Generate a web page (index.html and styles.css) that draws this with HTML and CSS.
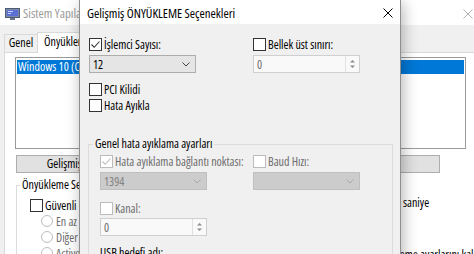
FILE: index.html
```html
<!DOCTYPE html>
<html lang="tr">
<head>
<meta charset="utf-8">
<title>Gelişmiş ÖNYÜKLEME Seçenekleri</title>
<link rel="stylesheet" href="styles.css">
</head>
<body>
<div class="bgwin">
  <div class="bg-title">
    <svg class="appicon" viewBox="0 0 15 12"><rect x="0.5" y="0.5" width="14" height="9" fill="#7d8aa3" stroke="#4d5b78"/><rect x="2" y="2" width="11" height="6" fill="#5b6fd6"/><rect x="3" y="3" width="5" height="1" fill="#c8d4ff"/><rect x="3" y="5" width="3" height="1" fill="#c8d4ff"/><rect x="5" y="10" width="5" height="2" fill="#6c7690"/></svg>
    <span class="bg-title-text">Sistem Yapılandırması</span>
    <span class="bg-close"><svg width="10" height="10" viewBox="0 0 10 10"><path d="M0.5 0.5L9.5 9.5M9.5 0.5L0.5 9.5" stroke="#b4b4b4" stroke-width="1"/></svg></span>
  </div>
  <div class="bg-body">
    <div class="tabs">
      <div class="tab">Genel</div>
      <div class="tab sel">Önyükleme</div>
      <div class="tab">Hizmetler</div>
    </div>
    <div class="panel">
      <div class="listbox">
        <div class="li sel">Windows 10 (C:\WINDOWS) : Geçerli işletim sistemi; Varsayılan işletim sistemi</div>
      </div>
      <div class="btnrow">
        <div class="btn b1">Gelişmiş Seçenekler...</div>
        <div class="btn b2">Varsayılan olarak ayarla</div>
        <div class="btn b3">Sil</div>
      </div>
      <div class="bottom">
        <fieldset class="bgrp">
          <legend>Önyükleme Seçenekleri</legend>
          <div class="bgrp-in">
            <div class="chk"><span class="box"></span>Güvenli Önyükleme</div>
            <div class="radios">
              <div class="rad"><span class="circ"></span>En az</div>
              <div class="rad"><span class="circ"></span>Diğer kabuk</div>
              <div class="rad"><span class="circ"></span>Active Directory onarımı</div>
            </div>
          </div>
        </fieldset>
        <div class="rightcol">
          <div class="rlabel">Zaman aşımı:</div>
          <div class="trow"><span class="tbox">30</span><span>saniye</span></div>
          <div class="chk perm"><span class="box"></span>Tüm önyükleme ayarlarını kalıcı yap</div>
        </div>
      </div>
    </div>
  </div>
</div>

<div class="dlg">
  <div class="dlg-title">
    <span>Gelişmiş ÖNYÜKLEME Seçenekleri</span>
    <span class="dlg-close"><svg width="10" height="10" viewBox="0 0 10 10"><path d="M0.5 0.5L9.5 9.5M9.5 0.5L0.5 9.5" stroke="#000" stroke-width="1"/></svg></span>
  </div>
  <div class="dlg-body">
    <div class="grid2">
      <div class="chk"><span class="box"><svg viewBox="0 0 11 11"><path d="M1.5 5.5L4.2 8.3L9.5 2.5" fill="none" stroke="#333" stroke-width="1.1"/></svg></span>İşlemci Sayısı:</div>
      <div class="chk"><span class="box"></span>Bellek üst sınırı:</div>
      <div class="combo"><span>12</span><svg class="chev" viewBox="0 0 8 5"><path d="M0.5 0.5L4 4L7.5 0.5" fill="none" stroke="#444" stroke-width="1"/></svg></div>
      <div class="spin"><span>0</span><span class="arrows"><svg viewBox="0 0 13 16"><path d="M4 6.5L6.5 4L9 6.5Z" fill="#8a8a8a"/><path d="M4 9.5L6.5 12L9 9.5Z" fill="#8a8a8a"/></svg></span></div>
    </div>
    <div class="chk r3"><span class="box"></span>PCI Kilidi</div>
    <div class="chk r4"><span class="box"></span>Hata Ayıkla</div>
    <fieldset class="grp">
      <legend>Genel hata ayıklama ayarları</legend>
      <div class="grp-in">
        <div class="grid2 g2">
          <div class="chk dis"><span class="box"><svg viewBox="0 0 11 11"><path d="M1.5 5.5L4.2 8.3L9.5 2.5" fill="none" stroke="#bcbcbc" stroke-width="1.1"/></svg></span>Hata ayıklama bağlantı noktası:</div>
          <div class="chk dis"><span class="box"></span>Baud Hızı:</div>
          <div class="combo dis"><span>1394</span><svg class="chev" viewBox="0 0 8 5"><path d="M0.5 0.5L4 4L7.5 0.5" fill="none" stroke="#a8a8a8" stroke-width="1"/></svg></div>
          <div class="combo dis"><span></span><svg class="chev" viewBox="0 0 8 5"><path d="M0.5 0.5L4 4L7.5 0.5" fill="none" stroke="#a8a8a8" stroke-width="1"/></svg></div>
        </div>
        <div class="chk dis r5"><span class="box"></span>Kanal:</div>
        <div class="spin s2"><span>0</span><span class="arrows"><svg viewBox="0 0 13 16"><path d="M4 6.5L6.5 4L9 6.5Z" fill="#8a8a8a"/><path d="M4 9.5L6.5 12L9 9.5Z" fill="#8a8a8a"/></svg></span></div>
        <div class="usb">USB hedefi adı:</div>
      </div>
    </fieldset>
  </div>
</div>
</body>
</html>
```
FILE: styles.css
```css
* { box-sizing: border-box; margin: 0; padding: 0; }
html, body { width: 474px; height: 254px; overflow: hidden; }
body {
  position: relative;
  background: #f0f0f0;
  font-family: "Open Sans", "Noto Sans", sans-serif;
  font-size: 12px;
  font-stretch: 87.5%;
  line-height: 15px;
  color: #000;
}

/* background window */
.bgwin { position: absolute; left: 0; top: 0; z-index: 0; width: 492px; height: 300px; background: #f0f0f0; }
.bg-title { height: 25px; background: #fff; display: flex; align-items: center; padding: 2px 0 0 5px; font-size: 12.8px; }
.appicon { width: 15px; height: 12px; margin-right: 3px; flex: none; }
.bg-title-text { color: #9a9a9a; }
.bg-close { margin-left: auto; width: 46px; display: flex; justify-content: center; padding-right: 2px; }
.bg-close svg { display: block; }

.bg-body { padding: 7px 0 0 4px; }
.tabs { display: flex; align-items: flex-end; height: 20px; }
.tab { height: 18px; border: 1px solid #d9d9d9; border-bottom: none; background: #f0f0f0; padding: 0 4px; line-height: 16px; }
.tab:first-child { width: 34px; text-align: center; padding: 0; }
.tab.sel { height: 21px; margin-bottom: -1px; background: #fff; margin-left: -1px; margin-right: -1px; position: relative; z-index: 1; padding: 1px 6px 0 6px; }
.panel { width: 474px; height: 240px; border: 1px solid #d9d9d9; background: #fff; padding: 4px 0 0 10px; }
.listbox { width: 451px; height: 92px; border: 1px solid #9a9a9a; padding: 2px 1px; }
.li { height: 14px; line-height: 14px; white-space: nowrap; overflow: hidden; padding-left: 1px; }
.li.sel { background: #0078d7; color: #fff; }

.btnrow { display: flex; gap: 7px; margin-top: 6px; padding-left: 1px; }
.btn { height: 18px; border: 1px solid #adadad; background: #e1e1e1; text-align: center; line-height: 16px; white-space: nowrap; }
.b1 { width: 152px; }
.b2 { width: 145px; }
.b3 { width: 113px; }

.bottom { display: flex; margin-top: 5px; }
.bgrp { width: 300px; height: 120px; margin-left: 1px; border: 1px solid #dcdcdc; padding: 0 0 0 3px; flex: none; }
.bgrp legend, .grp legend { padding: 0 2px; line-height: 14px; }
.bgrp-in { padding: 6px 0 0 10px; }
.radios { margin-left: 11px; }
.rad { height: 16px; display: flex; align-items: center; gap: 3px; color: #6d6d6d; }
.circ { width: 12px; height: 12px; border: 1px solid #bcbcbc; border-radius: 50%; background: #fff; flex: none; }
.rightcol { margin-left: 21px; }
.rlabel { line-height: 14px; }
.trow { display: flex; align-items: center; gap: 5px; margin-top: 3px; height: 15px; }
.tbox { width: 61px; height: 15px; border: 1px solid #7a7a7a; background: #fff; padding-left: 3px; line-height: 13px; }
.perm { margin-top: 37px; white-space: nowrap; }

/* checkboxes */
.chk { display: flex; align-items: center; height: 15px; gap: 2px; white-space: nowrap; }
.box { width: 13px; height: 13px; border: 1px solid #333; background: #fff; flex: none; display: flex; }
.box svg { width: 11px; height: 11px; display: block; }
.chk.dis { color: #6d6d6d; }
.chk.dis .box { border-color: #bcbcbc; }

/* front dialog */
.dlg {
  position: absolute; left: 79px; top: 0; z-index: 1; width: 322px; height: 300px;
  background: #f0f0f0; border: 1px solid #8f8f8f; border-top: none;
  box-shadow: 2px 3px 14px rgba(0, 0, 0, 0.3);
}
.dlg-title { height: 24px; background: #fff; display: flex; align-items: center; padding: 2px 0 0 7px; font-size: 12.8px; }
.dlg-close { margin-left: auto; width: 24px; display: flex; justify-content: center; padding-right: 1px; }
.dlg-close svg { display: block; }
.dlg-body { padding: 13px 0 0 9px; }

.grid2 { display: grid; grid-template-columns: 164px 107px; }
.g2 { grid-template-columns: 153px 107px; margin-top: 3px; }
.combo { height: 18px; width: 107px; margin-top: 3px; border: 1px solid #adadad; background: #e5e5e5; display: flex; align-items: center; padding-left: 3px; }
.chev { width: 8px; height: 5px; margin-left: auto; margin-right: 5px; display: block; }
.combo.dis { background: #cccccc; border-color: #bfbfbf; color: #838383; }
.spin { height: 18px; width: 107px; margin-top: 3px; border: 1px solid #cfcfcf; background: #f9f9f9; display: flex; align-items: center; padding-left: 3px; color: #6d6d6d; }
.arrows { margin-left: auto; width: 14px; height: 16px; border-left: 1px solid #e0e0e0; display: flex; }
.arrows svg { width: 13px; height: 16px; display: block; }
.s2 { margin-top: 2px; }

.r3 { margin-top: 8px; height: 16px; }
.r4 { height: 16px; }
.grp { width: 305px; height: 160px; margin: 24px 0 0 -1px; border: 1px solid #dcdcdc; padding: 0 0 0 4px; }
.grp-in { padding-left: 7px; }
.r5 { margin-top: 11px; }
.usb { margin-top: 9px; }
```
